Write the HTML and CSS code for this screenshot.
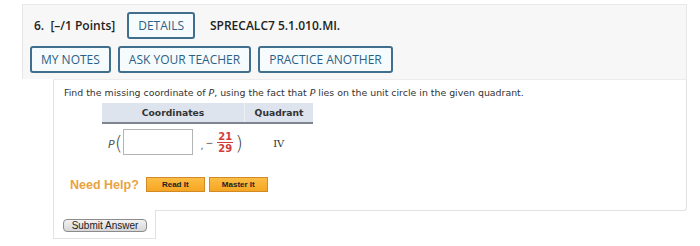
FILE: index.html
```html
<!DOCTYPE html>
<html>
<head>
<meta charset="utf-8">
<link rel="stylesheet" href="styles.css">
</head>
<body>
<div class="question">
  <div class="header">
    <div class="row">
      <span class="points">6.&nbsp; [–/1 Points]</span>
      <span class="btn">DETAILS</span>
      <span class="code">SPRECALC7 5.1.010.MI.</span>
    </div>
    <div class="row">
      <span class="btn">MY NOTES</span>
      <span class="btn">ASK YOUR TEACHER</span>
      <span class="btn">PRACTICE ANOTHER</span>
    </div>
  </div>
  <div class="body">
    <p class="prompt">Find the missing coordinate of <i>P</i>, using the fact that <i>P</i> lies on the unit circle in the given quadrant.</p>
    <table class="grid">
      <thead>
        <tr><th class="c1">Coordinates</th><th class="c2">Quadrant</th></tr>
      </thead>
      <tbody>
        <tr>
          <td class="c1">
            <div class="coord">
              <span class="pp"><i>P</i></span><span class="paren">(</span>
              <span class="box"></span>
              <span class="comma">,</span><span class="minus">−</span>
              <span class="frac"><span class="num">21</span><span class="den">29</span></span>
              <span class="paren">)</span>
            </div>
          </td>
          <td class="c2">IV</td>
        </tr>
      </tbody>
    </table>
    <div class="help">
      <span class="need">Need Help?</span>
      <span class="obtn">Read It</span>
      <span class="obtn">Master It</span>
    </div>
  </div>
  <div class="submit">
    <span class="sbtn">Submit Answer</span>
  </div>
</div>
</body>
</html>
```
FILE: styles.css
```css
body {
  margin: 0;
  background: #ffffff;
}
.question {
  margin: 4px 0 0 22px;
  width: 665px;
}
.header {
  background: #f7f7f7;
  border: 1px solid #e8e8e8;
  border-bottom: none;
  height: 75px;
  box-sizing: border-box;
  padding: 7px 0 0 7px;
  display: flex;
  flex-direction: column;
  gap: 7px;
}
.row {
  display: flex;
  align-items: center;
  gap: 7px;
  font-family: "Open Sans", sans-serif;
  font-size: 12px;
  font-weight: 600;
}
.points {
  margin-left: 4px;
  margin-right: 5px;
  color: #222;
}
.code {
  margin-left: 8px;
  color: #222;
}
.btn {
  display: inline-flex;
  align-items: center;
  box-sizing: border-box;
  height: 27px;
  padding: 0 9px;
  border: 2px solid #3f6f8c;
  border-radius: 3px;
  background: #f6fbfd;
  color: #2c5f86;
  font-weight: 500;
}
.body {
  margin-left: 31px;
  width: 634px;
  box-sizing: border-box;
  height: 132px;
  background: #fff;
  border: 1px solid #e2e2e2;
  border-top: 1px solid #ececec;
  border-radius: 0 0 3px 0;
  padding: 6px 0 0 10px;
  font-family: "DejaVu Sans", Verdana, sans-serif;
  font-size: 9.4px;
  color: #333;
}
.prompt {
  margin: 0;
  line-height: 14px;
}
.grid {
  margin: 3px 0 0 38px;
  border-collapse: collapse;
}
.grid th {
  background: #dde4ee;
  height: 19px;
  padding: 0;
  border-bottom: 2px solid #7e8590;
  font-weight: bold;
  color: #333;
  font-size: 9.2px;
}
.grid th.c1 {
  width: 142px;
  border-right: 1px solid #eef1f5;
}
.grid th.c2 {
  width: 68px;
}
.grid td {
  padding: 0;
  height: 34px;
}
.grid td.c2 {
  text-align: center;
  font-family: "DejaVu Serif", serif;
  font-size: 10px;
  color: #333;
  padding-top: 2px;
}
.coord {
  display: flex;
  align-items: center;
  padding-left: 6px;
}
.pp {
  font-size: 11px;
  color: #555;
  margin-top: 4px;
}
.paren {
  font-size: 20px;
  font-weight: 200;
  color: #444;
  line-height: 20px;
  margin-top: 2px;
}
.box {
  display: inline-block;
  width: 70px;
  height: 26px;
  box-sizing: border-box;
  border: 1px solid #b4b4b4;
  background: #fff;
  margin: 0 0 0 1px;
}
.comma {
  margin-left: 7px;
  color: #555;
  margin-top: 6px;
}
.minus {
  margin-left: 2px;
  color: #555;
}
.frac {
  display: inline-flex;
  flex-direction: column;
  align-items: center;
  margin: 0 2px 0 4px;
  color: #d23c3c;
  font-weight: bold;
  font-size: 10px;
  line-height: 11px;
}
.num {
  border-bottom: 1px solid #d23c3c;
  padding: 0 1px;
}
.help {
  display: flex;
  align-items: center;
  gap: 4px;
  margin: 17px 0 0 6px;
}
.need {
  font-family: "Liberation Sans", Arial, sans-serif;
  font-weight: bold;
  font-size: 12.5px;
  color: #e9a33f;
  margin-right: 3px;
}
.obtn {
  display: inline-flex;
  align-items: center;
  justify-content: center;
  box-sizing: border-box;
  width: 59px;
  height: 15px;
  background: linear-gradient(#fbbd45, #f5a623);
  border: 1px solid #d28a28;
  font-family: "Liberation Sans", Arial, sans-serif;
  font-weight: bold;
  font-size: 8px;
  color: #222;
}
.submit {
  margin: -1px 0 0 31px;
  width: 103px;
  height: 29px;
  box-sizing: border-box;
  border: 1px solid #e2e2e2;
  border-top: none;
  background: #fff;
  position: relative;
  display: flex;
  align-items: flex-start;
  padding: 9px 0 0 9px;
}
.sbtn {
  display: inline-flex;
  align-items: center;
  justify-content: center;
  box-sizing: border-box;
  width: 84px;
  height: 13px;
  border: 1px solid #8c8c8c;
  border-radius: 4px;
  background: linear-gradient(#f2f2f2, #d6d6d6);
  font-family: "Liberation Sans", Arial, sans-serif;
  font-size: 10px;
  color: #222;
}
```
